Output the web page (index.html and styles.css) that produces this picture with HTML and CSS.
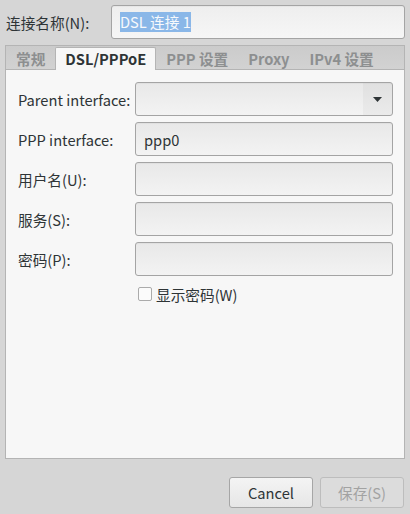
FILE: index.html
```html
<!DOCTYPE html>
<html lang="zh">
<head>
<meta charset="utf-8">
<title>DSL 连接 1</title>
<link rel="stylesheet" href="styles.css">
</head>
<body>
<div class="window">
  <div class="name-row">
    <label class="name-label">连接名称(N):</label>
    <div class="entry name-entry"><span class="sel">DSL 连接 1</span></div>
  </div>
  <div class="notebook">
    <div class="tabs">
      <div class="tab">常规</div>
      <div class="tab active">DSL/PPPoE</div>
      <div class="tab">PPP 设置</div>
      <div class="tab">Proxy</div>
      <div class="tab">IPv4 设置</div>
    </div>
    <div class="page">
      <div class="form">
        <label class="lbl">Parent interface:</label>
        <div class="entry combo"><span class="combo-text"></span><span class="combo-btn"><svg width="9" height="5" viewBox="0 0 9 5"><path d="M0 0H9L4.5 5Z" fill="#2e3436"/></svg></span></div>
        <label class="lbl">PPP interface:</label>
        <div class="entry">ppp0</div>
        <label class="lbl">用户名(U):</label>
        <div class="entry"></div>
        <label class="lbl">服务(S):</label>
        <div class="entry"></div>
        <label class="lbl">密码(P):</label>
        <div class="entry"></div>
        <div class="check-row"><span class="checkbox"></span><span>显示密码(W)</span></div>
      </div>
    </div>
  </div>
  <div class="buttons">
    <button class="btn">Cancel</button>
    <button class="btn disabled">保存(S)</button>
  </div>
</div>
</body>
</html>
```

FILE: styles.css
```css
* { box-sizing: border-box; }
html, body { margin: 0; padding: 0; }
body {
  width: 410px;
  height: 514px;
  background: #d6d6d6;
  font-family: "Noto Sans CJK SC", "Noto Sans", sans-serif;
  font-size: 14.67px;
  color: #2e3436;
  overflow: hidden;
}
.window {
  height: 514px;
  padding: 5px 5px 6px 5px;
  display: flex;
  flex-direction: column;
}
.name-row {
  display: flex;
  align-items: center;
  height: 34px;
}
.name-label {
  flex: 0 0 106px;
  padding-left: 1px;
}
.entry {
  height: 34px;
  border: 1px solid #a4a4a4;
  border-radius: 3px;
  background: linear-gradient(#e8e8e8, #f3f3f3);
  padding: 0 8px;
  display: flex;
  align-items: center;
  box-shadow: inset 0 1px 0 rgba(0,0,0,0.03);
}
.name-entry {
  flex: 1;
  background: linear-gradient(#eeeeee, #f6f6f6);
}
.sel {
  background: #8ab7e8;
  color: #f7f9fc;
  line-height: 20px;
  height: 20px;
  padding: 0;
}
.notebook {
  flex: 1;
  margin-top: 6px;
  display: flex;
  flex-direction: column;
}
.tabs {
  height: 25px;
  border: 1px solid #b4b4b4;
  background: linear-gradient(#cbcbcb, #d2d2d2);
  display: flex;
  align-items: flex-end;
}
.tab {
  height: 23px;
  margin-bottom: -1px;
  padding: 0 9px;
  border: 1px solid transparent;
  border-bottom: none;
  font-weight: 700;
  color: #8d8f90;
  line-height: 21px;
  white-space: nowrap;
}
.tab.active {
  background: #f7f7f7;
  border-color: #b4b4b4;
  border-radius: 2px 2px 0 0;
  color: #2e3436;
}
.page {
  flex: 1;
  background: #f7f7f7;
  border: 1px solid #b4b4b4;
  border-top: none;
  padding: 12px 11px 0 12px;
}
.form {
  display: grid;
  grid-template-columns: 117px 1fr;
  grid-auto-rows: 34px;
  row-gap: 6px;
  align-items: center;
}
.lbl { white-space: nowrap; }
.combo {
  padding: 0;
  justify-content: space-between;
}
.combo-btn {
  width: 29px;
  height: 100%;
  background: rgba(0,0,0,0.03);
  display: flex;
  align-items: center;
  justify-content: center;
  border-radius: 0 2px 2px 0;
}
.check-row {
  grid-column: 2;
  display: flex;
  align-items: center;
  gap: 4px;
  padding-left: 3px;
  height: 24px;
  align-self: start;
}
.checkbox {
  width: 14px;
  height: 14px;
  border: 1px solid #ababab;
  border-radius: 2px;
  background: #fbfbfb;
}
.buttons {
  display: flex;
  justify-content: flex-end;
  gap: 7px;
  margin-top: 18px;
  padding-right: 1px;
}
.btn {
  width: 84px;
  height: 31px;
  font: inherit;
  color: #2e3436;
  border: 1px solid #a6a6a6;
  border-radius: 3px;
  background: linear-gradient(#f4f4f4, #e6e6e6);
  padding: 0;
}
.btn.disabled {
  color: #a2a2a2;
  border-color: #bdbdbd;
  background: #dcdcdc;
}
```
